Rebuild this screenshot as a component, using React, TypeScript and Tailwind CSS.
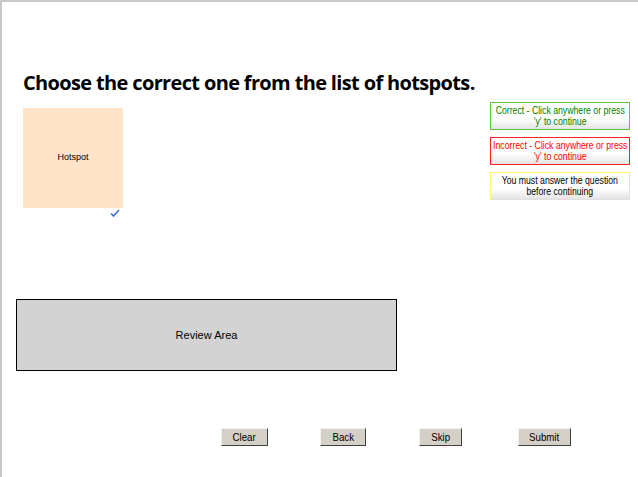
const sans = "font-['Liberation_Sans',Arial,sans-serif]";

function Feedback({ tone, children }: { tone: "ok" | "bad" | "warn"; children: React.ReactNode }) {
  const styles = {
    ok: "border-[#5fbf3f] text-[#008000]",
    bad: "border-[#ff2020] text-[#ff0000]",
    warn: "border-t-[#ffff66] border-l-[#ffff66] border-r-[#e0e0e0] border-b-[#e0e0e0] text-black",
  }[tone];
  return (
    <div
      className={`w-[140px] h-[28px] border bg-gradient-to-b from-white from-60% to-[#e4e4e4] flex items-center justify-center text-center text-[10px] leading-[11px] ${sans} ${styles}`}
    >
      <span className="inline-block whitespace-nowrap scale-x-[0.87]">{children}</span>
    </div>
  );
}

function Btn({ label, className }: { label: string; className: string }) {
  return (
    <button
      className={`${className} h-[18px] flex items-center justify-center bg-[#d4d0c8] border border-t-[#f4f2ee] border-l-[#f4f2ee] border-r-[#404040] border-b-[#404040] text-[11px] leading-none text-black ${sans}`}
    >
      <span className="inline-block scale-x-[0.88]">{label}</span>
    </button>
  );
}

export default function App() {
  return (
    <div className="w-[638px] h-[477px] bg-white border-t-2 border-l-2 border-[#c8c8c8] overflow-hidden">
      <h1 className="mt-[67px] ml-[21px] text-[20px] leading-[28px] font-bold text-black font-['Open_Sans',sans-serif] tracking-[-0.65px]">
        Choose the correct one from the list of hotspots.
      </h1>

      <div className="flex justify-between mt-[5px] pr-[8px]">
        <div className="ml-[21px] mt-[6px] flex flex-col items-end">
          <div className={`w-[100px] h-[100px] bg-[#ffe4c9] flex items-center justify-center text-[9px] text-black ${sans}`}>
            Hotspot
          </div>
          <svg width="10" height="8" viewBox="0 0 10 8" className="mr-[3px] mt-[1px]">
            <path d="M1 4.5 L3.5 7 L9 1" fill="none" stroke="#3a6fd8" strokeWidth="1.6" />
          </svg>
        </div>
        <div className="flex flex-col gap-[7px]">
          <Feedback tone="ok">
            Correct - Click anywhere or press
            <br />
            'y' to continue
          </Feedback>
          <Feedback tone="bad">
            Incorrect - Click anywhere or press
            <br />
            'y' to continue
          </Feedback>
          <Feedback tone="warn">
            You must answer the question
            <br />
            before continuing
          </Feedback>
        </div>
      </div>

      <div className={`ml-[14px] mt-[82px] w-[381px] h-[72px] bg-[#d3d3d3] border border-black flex items-center justify-center text-[11px] text-black ${sans}`}>
        Review Area
      </div>

      <div className="flex items-start mt-[57px] ml-[219px]">
        <Btn label="Clear" className="w-[47px]" />
        <Btn label="Back" className="w-[46px] ml-[52px]" />
        <Btn label="Skip" className="w-[43px] ml-[53px]" />
        <Btn label="Submit" className="w-[53px] ml-[56px]" />
      </div>
    </div>
  );
}
